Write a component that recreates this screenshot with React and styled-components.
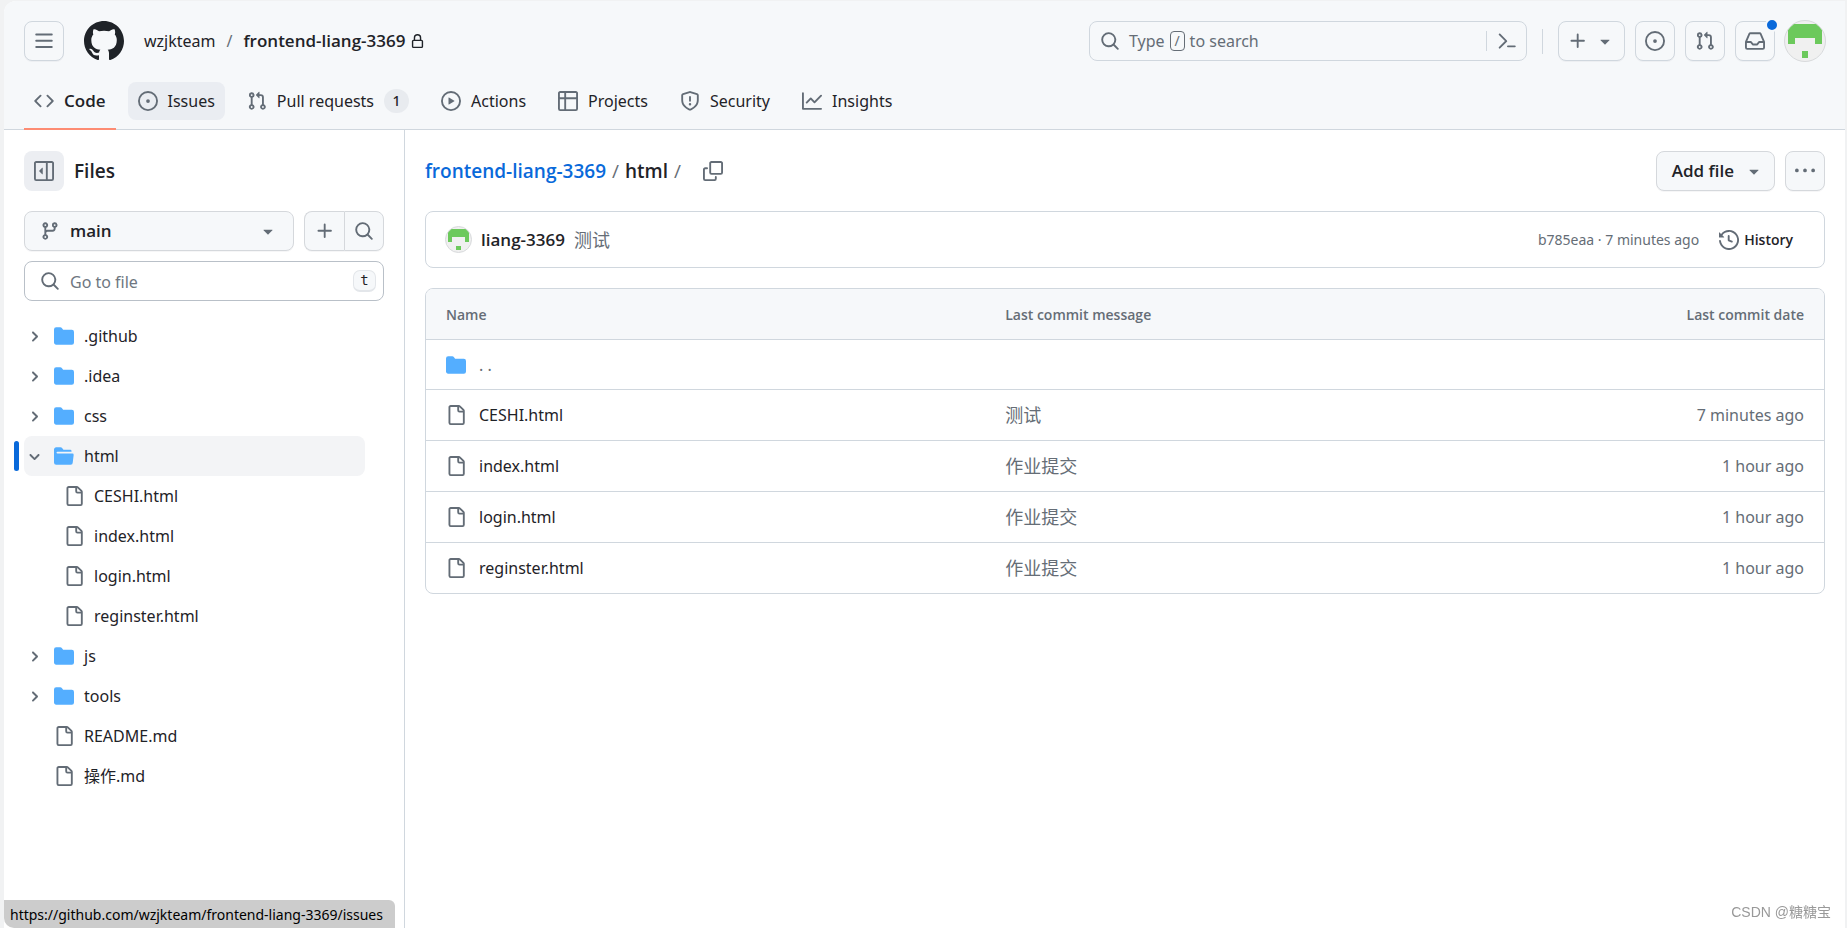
import React from "react";
import styled, { createGlobalStyle, css } from "styled-components";

const color = {
  fg: "#1f2328",
  muted: "#656d76",
  icon: "#636c76",
  border: "#d0d7de",
  subtle: "#f6f8fa",
  accent: "#0969da",
  folder: "#54aeff",
};

const PATHS = {
  menu: "M1 2.75A.75.75 0 0 1 1.75 2h12.5a.75.75 0 0 1 0 1.5H1.75A.75.75 0 0 1 1 2.75Zm0 5A.75.75 0 0 1 1.75 7h12.5a.75.75 0 0 1 0 1.5H1.75A.75.75 0 0 1 1 7.75ZM1.75 12h12.5a.75.75 0 0 1 0 1.5H1.75a.75.75 0 0 1 0-1.5Z",
  mark: "M8 0c4.42 0 8 3.58 8 8a8.013 8.013 0 0 1-5.45 7.59c-.4.08-.55-.17-.55-.38 0-.27.01-1.13.01-2.2 0-.75-.25-1.23-.54-1.48 1.78-.2 3.65-.88 3.65-3.95 0-.88-.31-1.59-.82-2.15.08-.2.36-1.02-.08-2.12 0 0-.67-.22-2.2.82-.64-.18-1.32-.27-2-.27-.68 0-1.36.09-2 .27-1.53-1.03-2.2-.82-2.2-.82-.44 1.1-.16 1.92-.08 2.12-.51.56-.82 1.28-.82 2.15 0 3.06 1.86 3.75 3.64 3.95-.23.2-.44.55-.51 1.07-.46.21-1.61.55-2.33-.66-.15-.24-.6-.83-1.23-.82-.67.01-.27.38.01.53.34.19.73.9.82 1.13.16.45.68 1.31 2.69.94 0 .67.01 1.3.01 1.49 0 .21-.15.45-.55.38A7.995 7.995 0 0 1 0 8c0-4.42 3.58-8 8-8Z",
  lock: "M4 4a4 4 0 0 1 8 0v2h.25c.966 0 1.75.784 1.75 1.75v5.5A1.75 1.75 0 0 1 12.25 15h-8.5A1.75 1.75 0 0 1 2 13.25v-5.5C2 6.784 2.784 6 3.75 6H4Zm8.25 3.5h-8.5a.25.25 0 0 0-.25.25v5.5c0 .138.112.25.25.25h8.5a.25.25 0 0 0 .25-.25v-5.5a.25.25 0 0 0-.25-.25ZM10.5 6V4a2.5 2.5 0 1 0-5 0v2Z",
  code: "m11.28 3.22 4.25 4.25a.75.75 0 0 1 0 1.06l-4.25 4.25a.749.749 0 0 1-1.275-.326.749.749 0 0 1 .215-.734L13.94 8l-3.72-3.72a.749.749 0 0 1 .326-1.275.749.749 0 0 1 .734.215Zm-6.56 0a.751.751 0 0 1 1.042.018.751.751 0 0 1 .018 1.042L2.06 8l3.72 3.72a.749.749 0 0 1-.326 1.275.749.749 0 0 1-.734-.215L.47 8.53a.75.75 0 0 1 0-1.06Z",
  issue: "M8 9.5a1.5 1.5 0 1 0 0-3 1.5 1.5 0 0 0 0 3ZM8 0a8 8 0 1 1 0 16A8 8 0 0 1 8 0ZM1.5 8a6.5 6.5 0 1 0 13 0 6.5 6.5 0 0 0-13 0Z",
  pull: "M1.5 3.25a2.25 2.25 0 1 1 3 2.122v5.256a2.251 2.251 0 1 1-1.5 0V5.372A2.25 2.25 0 0 1 1.5 3.25Zm5.677-.177L9.573.677A.25.25 0 0 1 10 .854V2.5h1A2.5 2.5 0 0 1 13.5 5v5.628a2.251 2.251 0 1 1-1.5 0V5a1 1 0 0 0-1-1h-1v1.646a.25.25 0 0 1-.427.177L7.177 3.427a.25.25 0 0 1 0-.354ZM3.75 2.5a.75.75 0 1 0 0 1.5.75.75 0 0 0 0-1.5Zm0 9.5a.75.75 0 1 0 0 1.5.75.75 0 0 0 0-1.5Zm8.25.75a.75.75 0 1 0 1.5 0 .75.75 0 0 0-1.5 0Z",
  play: "M8 0a8 8 0 1 1 0 16A8 8 0 0 1 8 0ZM1.5 8a6.5 6.5 0 1 0 13 0 6.5 6.5 0 0 0-13 0Zm4.879-2.773 4.264 2.559a.25.25 0 0 1 0 .428l-4.264 2.559A.25.25 0 0 1 6 10.559V5.442a.25.25 0 0 1 .379-.215Z",
  table: "M0 1.75C0 .784.784 0 1.75 0h12.5C15.216 0 16 .784 16 1.75v12.5A1.75 1.75 0 0 1 14.25 16H1.75A1.75 1.75 0 0 1 0 14.25ZM6.5 6.5v8h7.75a.25.25 0 0 0 .25-.25V6.5Zm8-1.5V1.75a.25.25 0 0 0-.25-.25H6.5V5Zm-13 1.5v7.75c0 .138.112.25.25.25H5v-8ZM5 5V1.5H1.75a.25.25 0 0 0-.25.25V5Z",
  shield: "M7.467.133a1.748 1.748 0 0 1 1.066 0l5.25 1.68A1.75 1.75 0 0 1 15 3.48V7c0 1.566-.32 3.182-1.303 4.682-.983 1.498-2.585 2.813-5.032 3.855a1.697 1.697 0 0 1-1.33 0c-2.447-1.042-4.049-2.357-5.032-3.855C1.32 10.182 1 8.566 1 7V3.48a1.75 1.75 0 0 1 1.217-1.667Zm.61 1.429a.25.25 0 0 0-.153 0l-5.25 1.68a.25.25 0 0 0-.174.238V7c0 1.358.275 2.666 1.057 3.86.784 1.194 2.121 2.34 4.366 3.297a.196.196 0 0 0 .154 0c2.245-.956 3.582-2.104 4.366-3.298C13.225 9.666 13.5 8.36 13.5 7V3.48a.251.251 0 0 0-.174-.237l-5.25-1.68ZM8.75 4.75v3a.75.75 0 0 1-1.5 0v-3a.75.75 0 0 1 1.5 0ZM9 10.5a1 1 0 1 1-2 0 1 1 0 0 1 2 0Z",
  graph: "M1.5 1.75V13.5h13.75a.75.75 0 0 1 0 1.5H.75a.75.75 0 0 1-.75-.75V1.75a.75.75 0 0 1 1.5 0Zm14.28 2.53-5.25 5.25a.75.75 0 0 1-1.06 0L7 7.06 4.28 9.78a.751.751 0 0 1-1.042-.018.751.751 0 0 1-.018-1.042l3.25-3.25a.75.75 0 0 1 1.06 0L10 7.94l4.72-4.72a.751.751 0 0 1 1.042.018.751.751 0 0 1 .018 1.042Z",
  search: "M10.68 11.74a6 6 0 0 1-7.922-8.982 6 6 0 0 1 8.982 7.922l3.04 3.04a.749.749 0 0 1-.326 1.275.749.749 0 0 1-.734-.215ZM11.5 7a4.499 4.499 0 1 0-8.997 0A4.499 4.499 0 0 0 11.5 7Z",
  prompt: "m6.354 8.04-4.773 4.773a.75.75 0 1 0 1.061 1.06L7.945 8.57a.75.75 0 0 0 0-1.06L2.642 2.206a.75.75 0 0 0-1.06 1.061L6.353 8.04ZM8.75 11.5a.75.75 0 0 0 0 1.5h5.5a.75.75 0 0 0 0-1.5h-5.5Z",
  plus: "M7.75 2a.75.75 0 0 1 .75.75V7h4.25a.75.75 0 0 1 0 1.5H8.5v4.25a.75.75 0 0 1-1.5 0V8.5H2.75a.75.75 0 0 1 0-1.5H7V2.75A.75.75 0 0 1 7.75 2Z",
  caret: "m4.427 7.427 3.396 3.396a.25.25 0 0 0 .354 0l3.396-3.396A.25.25 0 0 0 11.396 7H4.604a.25.25 0 0 0-.177.427Z",
  inbox: "M2.8 2.06A1.75 1.75 0 0 1 4.41 1h7.18c.7 0 1.333.417 1.61 1.06l2.74 6.395c.04.093.06.194.06.295v4.5A1.75 1.75 0 0 1 14.25 15H1.75A1.75 1.75 0 0 1 0 13.25v-4.5c0-.101.02-.202.06-.295Zm1.61.44a.25.25 0 0 0-.23.152L1.887 8H4.75a.75.75 0 0 1 .6.3L6.625 10h2.75l1.275-1.7a.75.75 0 0 1 .6-.3h2.863L11.82 2.652a.25.25 0 0 0-.23-.152Zm10.09 7h-2.875l-1.275 1.7a.75.75 0 0 1-.6.3h-3.5a.75.75 0 0 1-.6-.3L4.375 9.5H1.5v3.75c0 .138.112.25.25.25h12.5a.25.25 0 0 0 .25-.25Z",
  sidebar: "m4.177 7.823 2.396-2.396A.25.25 0 0 1 7 5.604v4.792a.25.25 0 0 1-.427.177L4.177 8.177a.25.25 0 0 1 0-.354ZM0 1.75C0 .784.784 0 1.75 0h12.5C15.216 0 16 .784 16 1.75v12.5A1.75 1.75 0 0 1 14.25 16H1.75A1.75 1.75 0 0 1 0 14.25Zm1.75-.25a.25.25 0 0 0-.25.25v12.5c0 .138.112.25.25.25H9.5v-13Zm12.5 13a.25.25 0 0 0 .25-.25V1.75a.25.25 0 0 0-.25-.25H11v13Z",
  branch: "M9.5 3.25a2.25 2.25 0 1 1 3 2.122V6A2.5 2.5 0 0 1 10 8.5H6a1 1 0 0 0-1 1v1.128a2.251 2.251 0 1 1-1.5 0V5.372a2.25 2.25 0 1 1 1.5 0v1.836A2.493 2.493 0 0 1 6 7h4a1 1 0 0 0 1-1v-.628A2.25 2.25 0 0 1 9.5 3.25Zm-6 0a.75.75 0 1 0 1.5 0 .75.75 0 0 0-1.5 0Zm8.25-.75a.75.75 0 1 0 0 1.5.75.75 0 0 0 0-1.5ZM4.25 12a.75.75 0 1 0 0 1.5.75.75 0 0 0 0-1.5Z",
  copy: "M0 6.75C0 5.784.784 5 1.75 5h1.5a.75.75 0 0 1 0 1.5h-1.5a.25.25 0 0 0-.25.25v7.5c0 .138.112.25.25.25h7.5a.25.25 0 0 0 .25-.25v-1.5a.75.75 0 0 1 1.5 0v1.5A1.75 1.75 0 0 1 9.25 16h-7.5A1.75 1.75 0 0 1 0 14.25ZM5 1.75C5 .784 5.784 0 6.75 0h7.5C15.216 0 16 .784 16 1.75v7.5A1.75 1.75 0 0 1 14.25 11h-7.5A1.75 1.75 0 0 1 5 9.25Zm1.75-.25a.25.25 0 0 0-.25.25v7.5c0 .138.112.25.25.25h7.5a.25.25 0 0 0 .25-.25v-7.5a.25.25 0 0 0-.25-.25Z",
  kebab: "M8 9a1.5 1.5 0 1 0 0-3 1.5 1.5 0 0 0 0 3ZM1.5 9a1.5 1.5 0 1 0 0-3 1.5 1.5 0 0 0 0 3Zm13 0a1.5 1.5 0 1 0 0-3 1.5 1.5 0 0 0 0 3Z",
  history: "m.427 1.927 1.215 1.215a8.002 8.002 0 1 1-1.6 5.685.75.75 0 1 1 1.493-.154 6.5 6.5 0 1 0 1.18-4.458l1.358 1.358A.25.25 0 0 1 3.896 6H.25A.25.25 0 0 1 0 5.75V2.104a.25.25 0 0 1 .427-.177ZM7.75 4a.75.75 0 0 1 .75.75v2.992l2.028.812a.75.75 0 0 1-.557 1.392l-2.5-1A.751.751 0 0 1 7 8.25v-3.5A.75.75 0 0 1 7.75 4Z",
  file: "M2 1.75C2 .784 2.784 0 3.75 0h6.586c.464 0 .909.184 1.237.513l2.914 2.914c.329.328.513.773.513 1.237v9.586A1.75 1.75 0 0 1 13.25 16h-9.5A1.75 1.75 0 0 1 2 14.25Zm1.75-.25a.25.25 0 0 0-.25.25v12.5c0 .138.112.25.25.25h9.5a.25.25 0 0 0 .25-.25V6h-2.75A1.75 1.75 0 0 1 9 4.25V1.5Zm6.75.062V4.25c0 .138.112.25.25.25h2.688l-.011-.013-2.914-2.914-.013-.011Z",
  folder: "M1.75 1A1.75 1.75 0 0 0 0 2.75v10.5C0 14.216.784 15 1.75 15h12.5A1.75 1.75 0 0 0 16 13.25v-8.5A1.75 1.75 0 0 0 14.25 3H7.5a.25.25 0 0 1-.2-.1l-.9-1.2C6.07 1.26 5.55 1 5 1H1.75Z",
  folderOpen: "M.513 1.513A1.75 1.75 0 0 1 1.75 1h3.5c.55 0 1.07.26 1.4.7l.9 1.2a.25.25 0 0 0 .2.1H13a1 1 0 0 1 1 1v.5H2.75a.75.75 0 0 0 0 1.5h11.978a1 1 0 0 1 .994 1.117L15 13.25A1.75 1.75 0 0 1 13.25 15H1.75A1.75 1.75 0 0 1 0 13.25V2.75c0-.464.184-.91.513-1.237Z",
  chevronRight: "M4.7 10c-.2 0-.4-.1-.5-.2-.3-.3-.3-.8 0-1.1L6.9 6 4.2 3.3c-.3-.3-.3-.8 0-1.1.3-.3.8-.3 1.1 0l3.3 3.2c.3.3.3.8 0 1.1L5.3 9.7c-.2.2-.4.3-.6.3Z",
  chevronDown: "M6 8.825c-.2 0-.4-.1-.5-.2l-3.3-3.3c-.3-.3-.3-.8 0-1.1.3-.3.8-.3 1.1 0l2.7 2.7 2.7-2.7c.3-.3.8-.3 1.1 0 .3.3.3.8 0 1.1l-3.2 3.2c-.2.2-.4.3-.6.3Z",
};

const Glyph = styled.svg`
  flex: none;
  display: block;
  fill: ${(p) => p.$tone || color.icon};
`;

function Icon({ name, size = 20, box = 16, tone }) {
  return (
    <Glyph width={size} height={size} viewBox={`0 0 ${box} ${box}`} $tone={tone} aria-hidden="true">
      <path fillRule="evenodd" d={PATHS[name]} />
    </Glyph>
  );
}

const AvatarArt = styled.svg`
  flex: none;
  display: block;
  box-sizing: border-box;
  border: 1px solid #d8dadc;
  border-radius: 50%;
  background: #f0f0f0;
`;

function Avatar({ size }) {
  return (
    <AvatarArt width={size} height={size} viewBox="0 0 12 12" role="img" aria-label="liang-3369">
      <path fill="#6cc95c" shapeRendering="crispEdges" d="M1 1h10v6H9V5H3v2H1ZM5 9h2v2H5Z" />
    </AvatarArt>
  );
}

const GlobalStyle = createGlobalStyle`
  *, *::before, *::after { box-sizing: border-box; }
  body {
    margin: 0;
    background: #f1f2f3;
    color: ${color.fg};
    font-family: "Noto Sans", "Noto Sans CJK SC", sans-serif;
    font-size: 16px;
    line-height: 24px;
  }
  a { color: inherit; text-decoration: none; }
  button, input { font: inherit; color: inherit; }
  button { cursor: pointer; }
`;

const strong = css`
  font-family: "Open Sans", "Noto Sans CJK SC", sans-serif;
  font-weight: 600;
  font-size: 17px;
`;

const Page = styled.div`
  display: flex;
  flex-direction: column;
  min-height: calc(100vh - 1px);
  margin: 1px 2px 0 4px;
  background: #fff;
  border-radius: 12px 0 0 0;
  overflow: hidden;
`;

const Header = styled.header`
  display: flex;
  flex-direction: column;
  gap: 21px;
  padding: 20px 19px 0 20px;
  background: ${color.subtle};
  border-bottom: 1px solid ${color.border};
`;

const TopBar = styled.div`
  display: flex;
  align-items: center;
  justify-content: space-between;
  height: 40px;
`;

const TopGroup = styled.div`
  display: flex;
  align-items: center;
  gap: ${(p) => p.$gap}px;
`;

const Button = styled.button`
  position: relative;
  display: flex;
  align-items: center;
  justify-content: ${(p) => (p.$spread ? "space-between" : "center")};
  gap: ${(p) => p.$gap || 10}px;
  height: 40px;
  width: ${(p) => (p.$square ? "40px" : "auto")};
  flex: ${(p) => (p.$grow ? "1" : "none")};
  padding: ${(p) => p.$pad || "0"};
  border: 1px solid ${(p) => (p.$solid ? "#d5d8dc" : color.border)};
  border-radius: 8px;
  background: ${color.subtle};
  box-shadow: 0 1px 0 rgba(31, 35, 40, 0.04);
  ${(p) => p.$strong && strong}
`;

const HomeLink = styled.a`
  display: flex;
`;

const Trail = styled.nav`
  display: flex;
  align-items: center;
`;

const Owner = styled.a``;

const Slash = styled.span`
  color: ${color.muted};
  padding: 0 11px;
`;

const RepoName = styled.a`
  ${strong}
  padding-right: 5px;
`;

const SearchBox = styled.div`
  display: flex;
  align-items: center;
  width: 438px;
  height: 40px;
  padding: 0 9px 0 10px;
  border: 1px solid ${color.border};
  border-radius: 8px;
`;

const SearchButton = styled.button`
  display: flex;
  flex: 1;
  align-items: center;
  gap: 5px;
  padding: 0;
  border: 0;
  background: none;
  color: ${color.muted};
  svg { margin-right: 4px; }
`;

const SlashKey = styled.kbd`
  width: 15px;
  height: 20px;
  border: 1px solid ${color.muted};
  border-radius: 4px;
  font: inherit;
  font-size: 14px;
  line-height: 18px;
  text-align: center;
`;

const PaletteButton = styled.button`
  display: flex;
  padding: 0 0 0 10px;
  border: 0;
  border-left: 1px solid ${color.border};
  background: none;
`;

const Divider = styled.span`
  width: 1px;
  height: 25px;
  margin: 0 15px;
  background: ${color.border};
`;

const Dot = styled.span`
  position: absolute;
  top: -4px;
  right: -5px;
  width: 14px;
  height: 14px;
  border: 2px solid ${color.subtle};
  border-radius: 50%;
  background: ${color.accent};
`;

const Tabs = styled.nav`
  display: flex;
  align-items: flex-start;
  gap: 12px;
  height: 47px;
`;

const Tab = styled.a`
  position: relative;
  display: flex;
  align-items: center;
  gap: 10px;
  height: 38px;
  padding: 0 10px;
  border-radius: 8px;
  background: ${(p) => (p.$hover ? "#eaedf2" : "none")};
  ${(p) => p.$current && css`
    ${strong}
    &::after {
      content: "";
      position: absolute;
      left: 0;
      right: 0;
      top: 46px;
      height: 2px;
      background: #fd8c73;
    }
  `}
`;

const Counter = styled.span`
  min-width: 25px;
  padding: 0 8px;
  border-radius: 12px;
  background: #e8ebef;
  font-size: 14px;
  text-align: center;
  font-weight: 500;
`;

const Body = styled.div`
  display: flex;
  flex: 1;
`;

const Sidebar = styled.aside`
  display: flex;
  flex-direction: column;
  flex: none;
  width: 401px;
  padding: 21px 20px 100px;
  border-right: 1px solid ${color.border};
`;

const SideHead = styled.div`
  display: flex;
  align-items: center;
  gap: 10px;
  margin-bottom: 20px;
`;

const ToggleButton = styled.button`
  display: grid;
  place-items: center;
  width: 40px;
  height: 40px;
  padding: 0;
  border: 0;
  border-radius: 8px;
  background: #eceef2;
`;

const SideTitle = styled.h2`
  ${strong}
  margin: 0;
  font-size: 19px;
`;

const BranchRow = styled.div`
  display: flex;
  gap: 10px;
  margin-bottom: 10px;
`;

const BranchName = styled.span`
  display: flex;
  align-items: center;
  gap: 10px;
`;

const ButtonPair = styled.div`
  display: flex;
  button:first-child { border-radius: 8px 0 0 8px; border-right-width: 0; }
  button:last-child { border-radius: 0 8px 8px 0; }
`;

const FileFilter = styled.label`
  display: flex;
  align-items: center;
  gap: 10px;
  height: 40px;
  margin-bottom: 15px;
  padding: 0 7px 0 15px;
  border: 1px solid #b9c0c8;
  border-radius: 8px;
`;

const FilterInput = styled.input`
  flex: 1;
  min-width: 0;
  padding: 2px 0 0;
  border: 0;
  outline: 0;
  background: none;
  &::placeholder { color: #6e7781; opacity: 1; }
`;

const KeyHint = styled.kbd`
  width: 23px;
  height: 22px;
  border: 1px solid #e3e6ea;
  border-bottom-width: 2px;
  border-radius: 7px;
  background: ${color.subtle};
  font: 14px/19px "DejaVu Sans Mono", monospace;
  text-align: center;
`;

const Tree = styled.ul`
  margin: 0 19px 0 0;
  padding: 0;
  list-style: none;
`;

const TreeLink = styled.a`
  position: relative;
  display: flex;
  align-items: center;
  gap: 10px;
  height: 40px;
  padding-left: ${(p) => (p.$nested ? 40 : p.$leaf ? 30 : 3)}px;
  border-radius: 8px;
  ${(p) => p.$current && css`
    background: #f3f4f6;
    &::before {
      content: "";
      position: absolute;
      left: -10px;
      top: 5px;
      width: 5px;
      height: 30px;
      border-radius: 3px;
      background: ${color.accent};
    }
  `}
`;

const Chevron = styled.span`
  padding: 0 2px 0 0;
`;

const Main = styled.main`
  display: flex;
  flex-direction: column;
  gap: 20px;
  flex: 1;
  min-width: 0;
  padding: 21px 20px;
`;

const PathRow = styled.div`
  display: flex;
  align-items: center;
  justify-content: space-between;
`;

const Path = styled.nav`
  display: flex;
  align-items: center;
  ${strong}
  font-size: 19px;
`;

const PathLink = styled.a`
  color: ${color.accent};
`;

const PathSlash = styled.span`
  padding: 0 6px;
  color: ${color.muted};
  font-weight: 400;
`;

const BareButton = styled.button`
  display: flex;
  padding: 0;
  margin-left: 16px;
  border: 0;
  background: none;
`;

const Actions = styled.div`
  display: flex;
  gap: 10px;
`;

const CommitBox = styled.section`
  display: flex;
  align-items: center;
  justify-content: space-between;
  height: 57px;
  padding: 0 31px 0 19px;
  border: 1px solid ${color.border};
  border-radius: 8px;
`;

const CommitPart = styled.div`
  display: flex;
  align-items: center;
  gap: ${(p) => p.$gap}px;
`;

const Author = styled.a`
  ${strong}
`;

const Message = styled.a`
  color: ${color.muted};
  font-size: 18px;
`;

const CommitMeta = styled.span`
  color: ${color.muted};
  font-size: 14px;
`;

const HistoryLink = styled.a`
  display: flex;
  align-items: center;
  gap: 5px;
  ${strong}
  font-size: 14px;
`;

const TableFrame = styled.div`
  border: 1px solid ${color.border};
  border-radius: 8px;
  overflow: hidden;
`;

const FileTable = styled.table`
  width: 100%;
  border-collapse: separate;
  border-spacing: 0;
  table-layout: fixed;
`;

const HeadCell = styled.th`
  ${strong}
  width: ${(p) => p.$width};
  height: 50px;
  padding: 2px 20px 0;
  background: ${color.subtle};
  color: ${color.muted};
  font-size: 14px;
  text-align: ${(p) => (p.$end ? "right" : "left")};
`;

const Cell = styled.td`
  height: ${(p) => (p.$parent ? 50 : 51)}px;
  padding: 0 20px;
  border-top: 1px solid ${color.border};
  color: ${color.muted};
  text-align: ${(p) => (p.$end ? "right" : "left")};
`;

const FileLink = styled.a`
  display: flex;
  align-items: center;
  gap: 13px;
  color: ${(p) => (p.$muted ? color.muted : color.fg)};
`;

const StatusBar = styled.div`
  position: fixed;
  left: 4px;
  bottom: 0;
  padding: 3px 12px 1px 6px;
  border-radius: 0 6px 0 10px;
  background: #ccc;
  color: #000;
  font-size: 14px;
`;

const Watermark = styled.div`
  position: fixed;
  right: 16px;
  bottom: 4px;
  color: #999;
  font-family: "Liberation Sans", "Noto Sans CJK SC", sans-serif;
  font-size: 14px;
`;

const tabs = [
  { label: "Code", icon: "code", current: true },
  { label: "Issues", icon: "issue", hover: true },
  { label: "Pull requests", icon: "pull", count: 1 },
  { label: "Actions", icon: "play" },
  { label: "Projects", icon: "table" },
  { label: "Security", icon: "shield" },
  { label: "Insights", icon: "graph" },
];

const tree = [
  { name: ".github", kind: "folder" },
  { name: ".idea", kind: "folder" },
  { name: "css", kind: "folder" },
  { name: "html", kind: "folder", open: true },
  { name: "CESHI.html", kind: "file", nested: true },
  { name: "index.html", kind: "file", nested: true },
  { name: "login.html", kind: "file", nested: true },
  { name: "reginster.html", kind: "file", nested: true },
  { name: "js", kind: "folder" },
  { name: "tools", kind: "folder" },
  { name: "README.md", kind: "file" },
  { name: "操作.md", kind: "file" },
];

const files = [
  { name: "CESHI.html", message: "测试", date: "7 minutes ago" },
  { name: "index.html", message: "作业提交", date: "1 hour ago" },
  { name: "login.html", message: "作业提交", date: "1 hour ago" },
  { name: "reginster.html", message: "作业提交", date: "1 hour ago" },
];

function TreeItem({ item }) {
  const folder = item.kind === "folder";
  return (
    <li>
      <TreeLink href="#" $nested={item.nested} $leaf={!folder} $current={item.open}>
        {folder && (
          <Chevron>
            <Icon name={item.open ? "chevronDown" : "chevronRight"} size={15} box={12} />
          </Chevron>
        )}
        {folder ? <Icon name={item.open ? "folderOpen" : "folder"} tone={color.folder} /> : <Icon name="file" />}
        {item.name}
      </TreeLink>
    </li>
  );
}

export default function App() {
  return (
    <>
      <GlobalStyle />
      <Page>
        <Header>
          <TopBar>
            <TopGroup $gap={20}>
              <Button $square aria-label="Open menu"><Icon name="menu" /></Button>
              <HomeLink href="#" aria-label="Home"><Icon name="mark" size={40} tone={color.fg} /></HomeLink>
              <Trail aria-label="Repository">
                <Owner href="#">wzjkteam</Owner>
                <Slash>/</Slash>
                <RepoName href="#">frontend-liang-3369</RepoName>
                <Icon name="lock" size={15} tone={color.fg} />
              </Trail>
            </TopGroup>
            <TopGroup $gap={0}>
              <SearchBox>
                <SearchButton>
                  <Icon name="search" />
                  <span>Type</span>
                  <SlashKey>/</SlashKey>
                  <span>to search</span>
                </SearchButton>
                <PaletteButton aria-label="Command palette"><Icon name="prompt" /></PaletteButton>
              </SearchBox>
              <Divider />
              <TopGroup $gap={9}>
                <TopGroup $gap={10}>
                  <Button $pad="0 9px" $gap={7} aria-label="Create new">
                    <Icon name="plus" />
                    <Icon name="caret" />
                  </Button>
                  <Button $square aria-label="Issues"><Icon name="issue" /></Button>
                  <Button $square aria-label="Pull requests"><Icon name="pull" /></Button>
                  <Button $square aria-label="Inbox"><Icon name="inbox" /><Dot /></Button>
                </TopGroup>
                <Avatar size={42} />
              </TopGroup>
            </TopGroup>
          </TopBar>
          <Tabs aria-label="Sections">
            {tabs.map((tab) => (
              <Tab key={tab.label} href="#" $current={tab.current} $hover={tab.hover}>
                <Icon name={tab.icon} />
                {tab.label}
                {tab.count && <Counter>{tab.count}</Counter>}
              </Tab>
            ))}
          </Tabs>
        </Header>

        <Body>
          <Sidebar>
            <SideHead>
              <ToggleButton aria-label="Collapse file tree"><Icon name="sidebar" /></ToggleButton>
              <SideTitle>Files</SideTitle>
            </SideHead>
            <BranchRow>
              <Button $grow $spread $solid $strong $pad="0 15px">
                <BranchName><Icon name="branch" />main</BranchName>
                <Icon name="caret" />
              </Button>
              <ButtonPair>
                <Button $square $solid aria-label="Add file"><Icon name="plus" /></Button>
                <Button $square $solid aria-label="Search this repository"><Icon name="search" /></Button>
              </ButtonPair>
            </BranchRow>
            <FileFilter>
              <Icon name="search" />
              <FilterInput type="text" placeholder="Go to file" aria-label="Go to file" />
              <KeyHint>t</KeyHint>
            </FileFilter>
            <Tree>
              {tree.map((item) => <TreeItem key={item.name} item={item} />)}
            </Tree>
          </Sidebar>

          <Main>
            <PathRow>
              <Path aria-label="Path">
                <PathLink href="#">frontend-liang-3369</PathLink>
                <PathSlash>/</PathSlash>
                html
                <PathSlash>/</PathSlash>
                <BareButton aria-label="Copy path"><Icon name="copy" /></BareButton>
              </Path>
              <Actions>
                <Button $solid $strong $pad="0 10px 0 15px">Add file<Icon name="caret" /></Button>
                <Button $solid $square aria-label="More options"><Icon name="kebab" /></Button>
              </Actions>
            </PathRow>

            <CommitBox>
              <CommitPart $gap={9}>
                <Avatar size={27} />
                <Author href="#">liang-3369</Author>
                <Message href="#">测试</Message>
              </CommitPart>
              <CommitPart $gap={20}>
                <CommitMeta>b785eaa · 7 minutes ago</CommitMeta>
                <HistoryLink href="#"><Icon name="history" />History</HistoryLink>
              </CommitPart>
            </CommitBox>

            <TableFrame>
              <FileTable>
                <thead>
                  <tr>
                    <HeadCell $width="40%">Name</HeadCell>
                    <HeadCell>Last commit message</HeadCell>
                    <HeadCell $width="20%" $end>Last commit date</HeadCell>
                  </tr>
                </thead>
                <tbody>
                  <tr>
                    <Cell $parent colSpan={3}>
                      <FileLink href="#" $muted><Icon name="folder" tone={color.folder} />. .</FileLink>
                    </Cell>
                  </tr>
                  {files.map((file) => (
                    <tr key={file.name}>
                      <Cell><FileLink href="#"><Icon name="file" />{file.name}</FileLink></Cell>
                      <Cell><Message href="#">{file.message}</Message></Cell>
                      <Cell $end>{file.date}</Cell>
                    </tr>
                  ))}
                </tbody>
              </FileTable>
            </TableFrame>
          </Main>
        </Body>
      </Page>
      <StatusBar>https://github.com/wzjkteam/frontend-liang-3369/issues</StatusBar>
      <Watermark>CSDN @糖糖宝</Watermark>
    </>
  );
}
